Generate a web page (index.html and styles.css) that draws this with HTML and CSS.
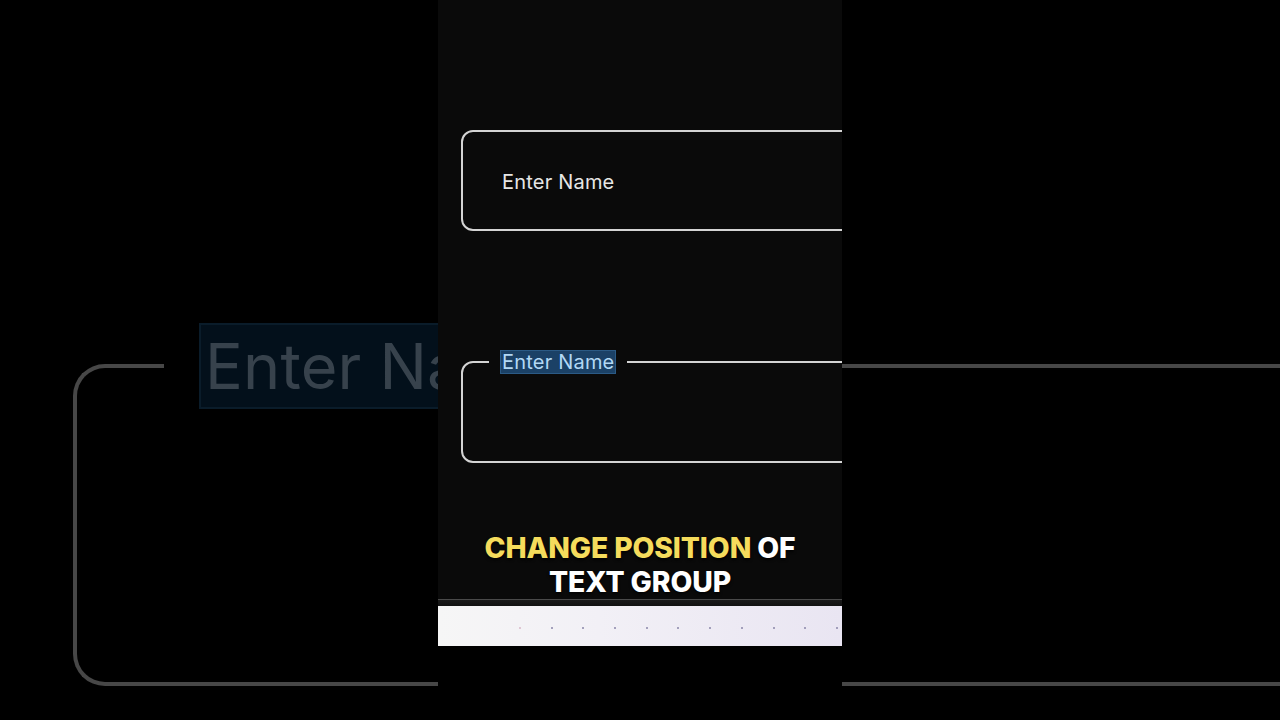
FILE: index.html
```html
<!DOCTYPE html>
<html lang="en">
<head>
<meta charset="utf-8">
<title>Change position of text group</title>
<link rel="stylesheet" href="styles.css">
</head>
<body>
<div class="stage">
  <div class="backdrop">
    <div class="bg-left">
      <fieldset class="bg-field">
        <legend class="bg-legend"><span class="bg-sel">Enter Na</span></legend>
      </fieldset>
    </div>
    <div class="bg-right">
      <div class="bg-line top"></div>
      <div class="bg-line bottom"></div>
    </div>
  </div>
  <main class="column">
    <div class="field">
      <span class="placeholder">Enter Name</span>
    </div>
    <fieldset class="field outlined">
      <legend class="legend"><span class="sel">Enter Name</span></legend>
    </fieldset>
    <div class="caption">
      <div><span class="hl">CHANGE POSITION</span> OF</div>
      <div>TEXT GROUP</div>
    </div>
    <div class="divider"></div>
    <div class="panel">
      <div class="dots">
        <i class="dot pink"></i><i class="dot"></i><i class="dot"></i><i class="dot"></i><i class="dot"></i><i class="dot"></i><i class="dot"></i><i class="dot"></i><i class="dot"></i><i class="dot"></i><i class="dot"></i>
      </div>
    </div>
    <div class="filler"></div>
  </main>
</div>
</body>
</html>
```

FILE: styles.css
```css
* { box-sizing: border-box; }
html, body { margin: 0; padding: 0; background: #000; }
body { width: 1280px; height: 720px; overflow: hidden; font-family: Inter, "Noto Sans", sans-serif; }

.stage { position: relative; width: 1280px; height: 720px; overflow: hidden; background: #000; }

/* blurred, enlarged backdrop of the video */
.backdrop { position: absolute; left: 0; top: 0; width: 1280px; height: 720px; display: flex; justify-content: space-between; }
.bg-left { width: 438px; height: 720px; overflow: hidden; padding: 323px 0 0 73px; }
.bg-field {
  width: 600px; height: 363px;
  margin: 0;
  padding: 0 0 0 87px;
  border: 4px solid #474747;
  border-right: 0;
  border-radius: 32px 0 0 32px;
  min-inline-size: 0;
  filter: blur(0.6px);
}
.bg-legend { padding: 0 0 0 35px; margin: 0; line-height: 0; }
.bg-sel {
  display: inline-block;
  width: 300px;
  white-space: nowrap;
  background: #03101b;
  border: 2px solid #0a1c2a;
  color: #37424c;
  font-size: 63px;
  line-height: 82px;
  padding: 0 4px;
  letter-spacing: 0.2px;
}
.bg-right { width: 438px; height: 720px; padding-top: 364px; filter: blur(0.6px); }
.bg-line { height: 4px; background: #474747; }
.bg-line.bottom { margin-top: 314px; }

/* center video column */
.column {
  position: relative;
  width: 404px;
  height: 720px;
  margin-left: 438px;
  background: #0a0a0a;
  overflow: hidden;
  display: flex;
  flex-direction: column;
  padding-top: 130px;
}

.field {
  width: 430px;
  height: 101px;
  margin: 0 0 0 23px;
  border: 2px solid #d4d4d4;
  border-radius: 12px;
  display: flex;
  align-items: center;
  padding: 3px 0 0 39px;
  flex-shrink: 0;
}
.placeholder { color: #e6e6e6; font-size: 20px; letter-spacing: 0.2px; }

.outlined {
  display: block;
  margin-top: 119px;
  height: 113px;
  padding: 0 0 0 26px;
  min-inline-size: 0;
}
.legend { padding: 0 11px; margin: 0; line-height: 0; }
.sel {
  display: inline-block;
  background: #1b4166;
  border: 1px solid #2b5a85;
  color: #b2d8f5;
  font-size: 20px;
  line-height: 22px;
  padding: 0 1px;
  letter-spacing: 0.2px;
}

.caption {
  margin-top: 66px;
  padding-top: 2px;
  text-align: center;
  color: #fff;
  font-family: Inter, "Noto Sans", sans-serif;
  font-weight: 800;
  font-size: 28.3px;
  line-height: 34px;
  letter-spacing: -0.1px;
  text-shadow: 0 2px 3px rgba(0,0,0,0.8);
}
.hl { color: #f5dc5c; }

.divider {
  margin-top: 0;
  height: 7px;
  border-top: 1px solid #4a4a4a;
  background: linear-gradient(#1a1a1a, #111);
  flex-shrink: 0;
}
.panel {
  height: 40px;
  flex-shrink: 0;
  background: linear-gradient(90deg, #f6f6f6 0%, #f2f0f6 40%, #e9e5f2 100%);
  display: flex;
  align-items: center;
}
.dots { display: flex; gap: 29.7px; padding-left: 81px; margin-top: 4px; }
.dot { display: block; width: 2px; height: 2px; border-radius: 50%; background: #8a86a8; flex-shrink: 0; }
.dot.pink { background: #d8b8c8; }
.filler { flex: 1; background: #000; }
```
